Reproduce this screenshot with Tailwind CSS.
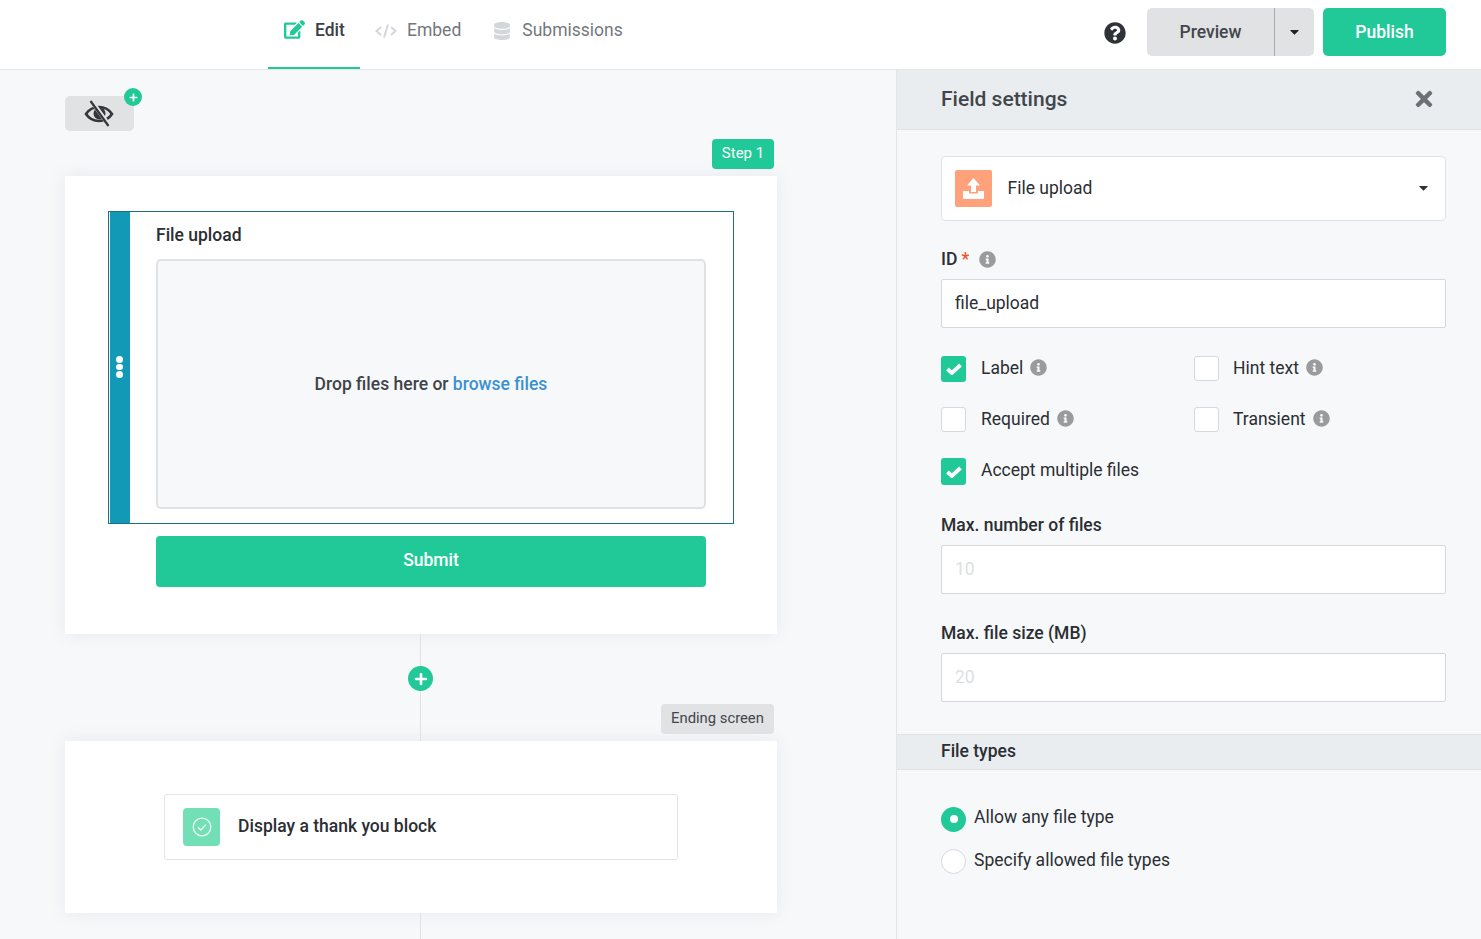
<!DOCTYPE html>
<html lang="en">
<head>
<meta charset="utf-8">
<title>Form editor</title>
<script src="https://cdn.jsdelivr.net/npm/@tailwindcss/browser@4"></script>
</head>
<body class="font-['Roboto',sans-serif] text-[17.5px] text-[#2b2e33] bg-[#f6f8fa] h-[939px] overflow-hidden">
<header class="h-[70px] bg-white border-b border-[#e3e6e9] flex relative">
  <nav class="flex ml-[268px] h-[69px]">
    <a class="w-[92px] h-[69px] border-b-2 border-[#21c998] flex items-center pl-[16px] pb-[8px] gap-[10px] text-[#3c4046] font-medium">
      <svg class="w-[21px] h-[19px] text-[#21c998]" viewBox="0 0 576 512" fill="currentColor"><path d="M402.6 83.2l90.2 90.2c3.8 3.8 3.8 10 0 13.8L274.4 405.6l-92.8 10.3c-12.4 1.4-22.9-9.1-21.5-21.5l10.3-92.8L388.8 83.2c3.8-3.8 10-3.8 13.8 0zm162-22.9l-48.8-48.8c-15.2-15.2-39.9-15.2-55.2 0l-35.4 35.4c-3.8 3.8-3.8 10 0 13.8l90.2 90.2c3.8 3.8 10 3.8 13.8 0l35.4-35.4c15.2-15.3 15.2-40 0-55.2zM384 346.2V448H64V128h229.8c3.2 0 6.2-1.3 8.5-3.5l40-40c7.6-7.6 2.2-20.5-8.5-20.5H48C21.5 64 0 85.5 0 112v352c0 26.5 21.5 48 48 48h352c26.5 0 48-21.5 48-48V306.2c0-10.7-12.9-16-20.5-8.5l-40 40c-2.2 2.3-3.5 5.3-3.5 8.5z"/></svg>
      <span class="mt-[1px]">Edit</span>
    </a>
    <a class="flex items-center pl-[15px] pb-[8px] gap-[10px] text-[#74787e]">
      <svg class="w-[22px] h-[16px] text-[#d3d7db]" viewBox="0 0 22 16" fill="none" stroke="currentColor" stroke-width="2"><path d="M6 4 1.5 8 6 12M16 4l4.500 4L16 12M13 1.500 9 14.500"/></svg>
      <span>Embed</span>
    </a>
    <a class="flex items-center pl-[33px] pb-[8px] gap-[12px] text-[#74787e]">
      <svg class="w-[16px] h-[18px] text-[#d3d7db]" viewBox="0 0 448 512" fill="currentColor"><path d="M448 73.143v45.714C448 159.143 347.667 192 224 192S0 159.143 0 118.857V73.143C0 32.857 100.333 0 224 0s224 32.857 224 73.143zM448 176v102.857C448 319.143 347.667 352 224 352S0 319.143 0 278.857V176c48.125 33.143 136.208 48.572 224 48.572S399.874 209.143 448 176zm0 160v102.857C448 479.143 347.667 512 224 512S0 479.143 0 438.857V336c48.125 33.143 136.208 48.572 224 48.572S399.874 369.143 448 336z"/></svg>
      <span>Submissions</span>
    </a>
  </nav>
  <div class="ml-auto mr-[35px] flex items-start pt-[8px]">
    <svg class="w-[22px] h-[22px] mt-[14px] mr-[21px] text-[#2f3338]" viewBox="0 0 512 512" fill="currentColor"><path d="M504 256c0 136.997-111.043 248-248 248S8 392.997 8 256C8 119.083 119.043 8 256 8s248 111.083 248 248zM262.655 90c-54.497 0-89.255 22.957-116.549 63.758-3.536 5.286-2.353 12.415 2.715 16.258l34.699 26.31c5.205 3.947 12.621 3.008 16.665-2.122 17.864-22.658 30.113-35.797 57.303-35.797 20.429 0 45.698 13.148 45.698 32.958 0 14.976-12.363 22.667-32.534 33.976C247.128 238.528 216 254.941 216 296v4c0 6.627 5.373 12 12 12h56c6.627 0 12-5.373 12-12v-1.333c0-28.462 83.186-29.647 83.186-106.667 0-58.002-60.165-102-116.531-102zM256 338c-25.365 0-46 20.635-46 46 0 25.364 20.635 46 46 46s46-20.636 46-46c0-25.365-20.635-46-46-46z"/></svg>
    <div class="flex h-[48px] w-[167px] bg-[#e0e2e4] rounded-[5px] text-[#42464c] font-medium">
      <span class="w-[128px] flex items-center justify-center border-r border-[#a9adb1]">Preview</span>
      <span class="flex-1 flex items-center justify-center">
        <svg class="w-[9px] h-[5px] text-[#1f2226]" viewBox="0 0 10 6" fill="currentColor"><path d="M.5 0h9a.5.5 0 0 1 .35.85L5 5.700.15.85A.5.5 0 0 1 .5 0z"/></svg>
      </span>
    </div>
    <button class="ml-[9px] w-[123px] h-[48px] rounded-[5px] bg-[#21c998] text-white font-medium">Publish</button>
  </div>
</header>

<main class="flex h-[869px]">
  <section class="w-[896px] shrink-0 px-[65px] pt-[26px] overflow-hidden">
    <div class="relative w-[69px] h-[35px] bg-[#e0e2e4] rounded-[5px] flex items-center justify-center">
      <svg class="w-[32px] h-[28px] -ml-[2px] text-[#33373c]" viewBox="0 0 32 28" fill="none" stroke="currentColor"><path stroke-width="2.600" d="M3 14c3-4.500 7.500-7 13-7s10 2.500 13 7c-3 4.500-7.500 7-13 7s-10-2.500-13-7z"/><circle cx="16.500" cy="13.500" r="6" fill="currentColor" stroke="none"/><path stroke="#e0e2e4" stroke-width="4.500" d="M8.500 1 26.500 26"/><path stroke-width="2.200" d="M7.500 1 25.500 26"/></svg>
      <span class="absolute -top-[8px] -right-[8px] w-[18px] h-[18px] rounded-full bg-[#21c998] flex items-center justify-center">
        <svg class="w-[9px] h-[9px] text-white" viewBox="0 0 448 512" fill="currentColor"><path d="M416 208H272V64c0-17.670-14.330-32-32-32h-32c-17.670 0-32 14.330-32 32v144H32c-17.670 0-32 14.330-32 32v32c0 17.670 14.330 32 32 32h144v144c0 17.670 14.330 32 32 32h32c17.670 0 32-14.330 32-32V304h144c17.670 0 32-14.330 32-32v-32c0-17.670-14.330-32-32-32z"/></svg>
      </span>
    </div>

    <div class="w-[712px]">
      <div class="flex justify-end pr-[3px] mt-[8px] mb-[7px]">
        <span class="h-[30px] w-[62px] pb-[2px] rounded-[4px] bg-[#21c998] text-white text-[15px] flex items-center justify-center">Step 1</span>
      </div>
      <div class="h-[458px] bg-white shadow-[0_0_16px_rgba(120,135,150,0.12)] pt-[35px] pl-[43px]">
        <div class="w-[626px] h-[313px] border border-[#1f6f85] flex pl-[1px]">
          <div class="w-[20px] h-full bg-[#1199b5] flex flex-col items-center justify-center gap-[1.2px] pr-[1px] pb-[1px] shrink-0">
            <i class="w-[6.5px] h-[6.5px] rounded-full bg-white"></i>
            <i class="w-[6.5px] h-[6.5px] rounded-full bg-white"></i>
            <i class="w-[6.5px] h-[6.5px] rounded-full bg-white"></i>
          </div>
          <div class="pl-[26px] pt-[11px]">
            <div class="font-medium leading-[24px]">File upload</div>
            <div class="w-[550px] h-[250px] mt-[12px] bg-[#f6f8fa] border-2 border-[#dfe2e5] rounded-[5px] flex items-center justify-center font-medium text-[#3f4349]">
              <span>Drop files here or <span class="text-[#3b91cf]">browse files</span></span>
            </div>
          </div>
        </div>
        <button class="block ml-[48px] mt-[12px] w-[550px] h-[51px] pb-[2px] rounded-[4px] bg-[#21c998] text-white font-medium">Submit</button>
      </div>

      <div class="relative h-[107px] flex flex-col items-end pr-[3px] pt-[70px]">
        <i class="absolute left-[355px] top-0 bottom-0 w-px bg-[#e0e3e6]"></i>
        <span class="absolute left-[343px] top-[32px] w-[25px] h-[25px] rounded-full bg-[#21c998] flex items-center justify-center">
          <svg class="w-[14px] h-[14px] text-white" viewBox="0 0 448 512" fill="currentColor"><path d="M416 208H272V64c0-17.670-14.330-32-32-32h-32c-17.670 0-32 14.330-32 32v144H32c-17.670 0-32 14.330-32 32v32c0 17.670 14.330 32 32 32h144v144c0 17.670 14.330 32 32 32h32c17.670 0 32-14.330 32-32V304h144c17.670 0 32-14.330 32-32v-32c0-17.670-14.330-32-32-32z"/></svg>
        </span>
        <span class="h-[30px] w-[113px] pb-[2px] rounded-[4px] bg-[#e0e2e4] text-[#42464c] text-[14.8px] flex items-center justify-center">Ending screen</span>
      </div>

      <div class="h-[172px] bg-white shadow-[0_0_16px_rgba(120,135,150,0.12)] pt-[53px] pl-[99px]">
        <div class="w-[514px] h-[66px] border border-[#e2e5e8] rounded-[3px] flex items-center pl-[18px] gap-[18px] font-medium">
          <span class="w-[37px] h-[38px] rounded-[4px] bg-[#72dfb7] flex items-center justify-center">
            <svg class="w-[20px] h-[20px] text-[#f1fbf7]" viewBox="0 0 20 20" fill="none" stroke="currentColor" stroke-width="1.300"><circle cx="10" cy="10" r="8.800"/><path d="M6 10.300l2.800 2.700L14 7.600"/></svg>
          </span>
          <span class="-mt-[2px]">Display a thank you block</span>
        </div>
      </div>
      <div class="relative h-[26px]"><i class="absolute left-[355px] top-0 bottom-0 w-px bg-[#e0e3e6]"></i></div>
    </div>
  </section>

  <aside class="flex-1 border-l border-[#e3e6e9]">
    <div class="h-[60px] bg-[#e9edf0] border-b border-[#e0e4e7] flex items-center justify-between pl-[44px] pr-[48px]">
      <h2 class="text-[21px] font-medium text-[#42464c]">Field settings</h2>
      <svg class="w-[18px] h-[24px] -mt-[2px] text-[#6c7075]" viewBox="0 0 352 512" fill="currentColor"><path d="M242.720 256l100.070-100.070c12.280-12.280 12.280-32.190 0-44.480l-22.240-22.240c-12.280-12.280-32.190-12.280-44.480 0L176 189.280 75.930 89.210c-12.280-12.280-32.190-12.280-44.480 0L9.210 111.450c-12.280 12.280-12.280 32.190 0 44.480L109.280 256 9.210 356.070c-12.280 12.280-12.280 32.190 0 44.480l22.240 22.240c12.280 12.280 32.200 12.280 44.480 0L176 322.720l100.070 100.070c12.280 12.280 32.200 12.280 44.480 0l22.240-22.240c12.280-12.280 12.280-32.190 0-44.480L242.720 256z"/></svg>
    </div>

    <div class="pl-[44px] pr-[35px] pt-[26px]">
      <div class="h-[65px] bg-white border border-[#e0e3e6] rounded-[4px] flex items-center pl-[13px] pr-[17px]">
        <span class="w-[37px] h-[37px] rounded-[2px] bg-[#ffa27b] flex items-center justify-center">
          <svg class="w-[23px] h-[23px] text-white" viewBox="0 0 23 23" fill="currentColor"><path d="M11.500 1 18 8.500h-4V15H9V8.500H5z"/><path d="M1 14h6v2.500h9V14h6v7a1 1 0 0 1-1 1H2a1 1 0 0 1-1-1z"/></svg>
        </span>
        <span class="ml-[15.5px]">File upload</span>
        <svg class="ml-auto w-[9px] h-[5px] text-[#2f3338]" viewBox="0 0 10 6" fill="currentColor"><path d="M.5 0h9a.5.5 0 0 1 .35.85L5 5.700.15.85A.5.5 0 0 1 .5 0z"/></svg>
      </div>

      <div class="mt-[26px] h-[24px] flex items-center font-medium">
        <span>ID</span><span class="ml-[4px] text-[#f4511e]">*</span>
        <svg class="ml-[10px] w-[17px] h-[17px] text-[#999b9e]" viewBox="0 0 512 512" fill="currentColor"><path d="M256 8C119.043 8 8 119.083 8 256c0 136.997 111.043 248 248 248s248-111.003 248-248C504 119.083 392.957 8 256 8zm0 110c23.196 0 42 18.804 42 42s-18.804 42-42 42-42-18.804-42-42 18.804-42 42-42zm56 254c0 6.627-5.373 12-12 12h-88c-6.627 0-12-5.373-12-12v-24c0-6.627 5.373-12 12-12h12v-64h-12c-6.627 0-12-5.373-12-12v-24c0-6.627 5.373-12 12-12h64c6.627 0 12 5.373 12 12v100h12c6.627 0 12 5.373 12 12v24z"/></svg>
      </div>
      <div class="mt-[8px] h-[49px] bg-white border border-[#d5d8dc] rounded-[2px] flex items-center pl-[13px]">file_upload</div>

      <div class="mt-[28px] grid grid-cols-[253px_1fr] gap-y-[25px]">
        <div class="flex items-start h-[26px] gap-[15px]">
          <span class="w-[25px] h-[26px] rounded-[3px] bg-[#21c998] flex items-center justify-center"><svg class="w-[16px] h-[12px] text-white" viewBox="0 0 16 12" fill="none" stroke="currentColor" stroke-width="3.800"><path d="M1.500 6l4.300 4L14.500 2"/></svg></span>
          <span class="leading-[24px]">Label</span>
          <svg class="-ml-[8px] mt-[3px] w-[17px] h-[17px] text-[#999b9e]" viewBox="0 0 512 512" fill="currentColor"><path d="M256 8C119.043 8 8 119.083 8 256c0 136.997 111.043 248 248 248s248-111.003 248-248C504 119.083 392.957 8 256 8zm0 110c23.196 0 42 18.804 42 42s-18.804 42-42 42-42-18.804-42-42 18.804-42 42-42zm56 254c0 6.627-5.373 12-12 12h-88c-6.627 0-12-5.373-12-12v-24c0-6.627 5.373-12 12-12h12v-64h-12c-6.627 0-12-5.373-12-12v-24c0-6.627 5.373-12 12-12h64c6.627 0 12 5.373 12 12v100h12c6.627 0 12 5.373 12 12v24z"/></svg>
        </div>
        <div class="flex items-start h-[26px] gap-[14px]">
          <span class="w-[25px] h-[25px] rounded-[3px] bg-white border border-[#d5d8dc]"></span>
          <span class="leading-[24px]">Hint text</span>
          <svg class="-ml-[7px] mt-[3px] w-[17px] h-[17px] text-[#999b9e]" viewBox="0 0 512 512" fill="currentColor"><path d="M256 8C119.043 8 8 119.083 8 256c0 136.997 111.043 248 248 248s248-111.003 248-248C504 119.083 392.957 8 256 8zm0 110c23.196 0 42 18.804 42 42s-18.804 42-42 42-42-18.804-42-42 18.804-42 42-42zm56 254c0 6.627-5.373 12-12 12h-88c-6.627 0-12-5.373-12-12v-24c0-6.627 5.373-12 12-12h12v-64h-12c-6.627 0-12-5.373-12-12v-24c0-6.627 5.373-12 12-12h64c6.627 0 12 5.373 12 12v100h12c6.627 0 12 5.373 12 12v24z"/></svg>
        </div>
        <div class="flex items-start h-[26px] gap-[15px]">
          <span class="w-[25px] h-[25px] rounded-[3px] bg-white border border-[#d5d8dc]"></span>
          <span class="leading-[24px]">Required</span>
          <svg class="-ml-[8px] mt-[3px] w-[17px] h-[17px] text-[#999b9e]" viewBox="0 0 512 512" fill="currentColor"><path d="M256 8C119.043 8 8 119.083 8 256c0 136.997 111.043 248 248 248s248-111.003 248-248C504 119.083 392.957 8 256 8zm0 110c23.196 0 42 18.804 42 42s-18.804 42-42 42-42-18.804-42-42 18.804-42 42-42zm56 254c0 6.627-5.373 12-12 12h-88c-6.627 0-12-5.373-12-12v-24c0-6.627 5.373-12 12-12h12v-64h-12c-6.627 0-12-5.373-12-12v-24c0-6.627 5.373-12 12-12h64c6.627 0 12 5.373 12 12v100h12c6.627 0 12 5.373 12 12v24z"/></svg>
        </div>
        <div class="flex items-start h-[26px] gap-[14px]">
          <span class="w-[25px] h-[25px] rounded-[3px] bg-white border border-[#d5d8dc]"></span>
          <span class="leading-[24px]">Transient</span>
          <svg class="-ml-[7px] mt-[3px] w-[17px] h-[17px] text-[#999b9e]" viewBox="0 0 512 512" fill="currentColor"><path d="M256 8C119.043 8 8 119.083 8 256c0 136.997 111.043 248 248 248s248-111.003 248-248C504 119.083 392.957 8 256 8zm0 110c23.196 0 42 18.804 42 42s-18.804 42-42 42-42-18.804-42-42 18.804-42 42-42zm56 254c0 6.627-5.373 12-12 12h-88c-6.627 0-12-5.373-12-12v-24c0-6.627 5.373-12 12-12h12v-64h-12c-6.627 0-12-5.373-12-12v-24c0-6.627 5.373-12 12-12h64c6.627 0 12 5.373 12 12v100h12c6.627 0 12 5.373 12 12v24z"/></svg>
        </div>
        <div class="col-span-2 flex items-start h-[27px] gap-[15px]">
          <span class="w-[25px] h-[27px] rounded-[3px] bg-[#21c998] flex items-center justify-center"><svg class="w-[16px] h-[12px] text-white" viewBox="0 0 16 12" fill="none" stroke="currentColor" stroke-width="3.800"><path d="M1.500 6l4.300 4L14.500 2"/></svg></span>
          <span class="leading-[24px]">Accept multiple files</span>
        </div>
      </div>

      <div class="mt-[28px] h-[24px] leading-[24px] font-medium">Max. number of files</div>
      <div class="mt-[8px] h-[49px] bg-white border border-[#d5d8dc] rounded-[2px] flex items-center pl-[13px] text-[#dcdfe2]">10</div>
      <div class="mt-[27px] h-[24px] leading-[24px] font-medium">Max. file size (MB)</div>
      <div class="mt-[8px] h-[49px] bg-white border border-[#d5d8dc] rounded-[2px] flex items-center pl-[13px] text-[#dcdfe2]">20</div>
    </div>

    <div class="mt-[32px] h-[36px] pb-[2px] bg-[#e9edf0] border-y border-[#e0e4e7] flex items-center pl-[44px] font-medium">File types</div>

    <div class="pl-[44px] pt-[36px]">
      <div class="flex items-center h-[26px] gap-[8px]">
        <span class="w-[25px] h-[25px] rounded-full bg-[#21c998] flex items-center justify-center"><i class="w-[8px] h-[8px] rounded-full bg-white"></i></span>
        <span class="-mt-[4px]">Allow any file type</span>
      </div>
      <div class="flex items-center h-[26px] gap-[8px] mt-[16px]">
        <span class="w-[25px] h-[25px] rounded-full bg-white border border-[#d5d8dc]"></span>
        <span class="-mt-[2px]">Specify allowed file types</span>
      </div>
    </div>
  </aside>
</main>
</body>
</html>
